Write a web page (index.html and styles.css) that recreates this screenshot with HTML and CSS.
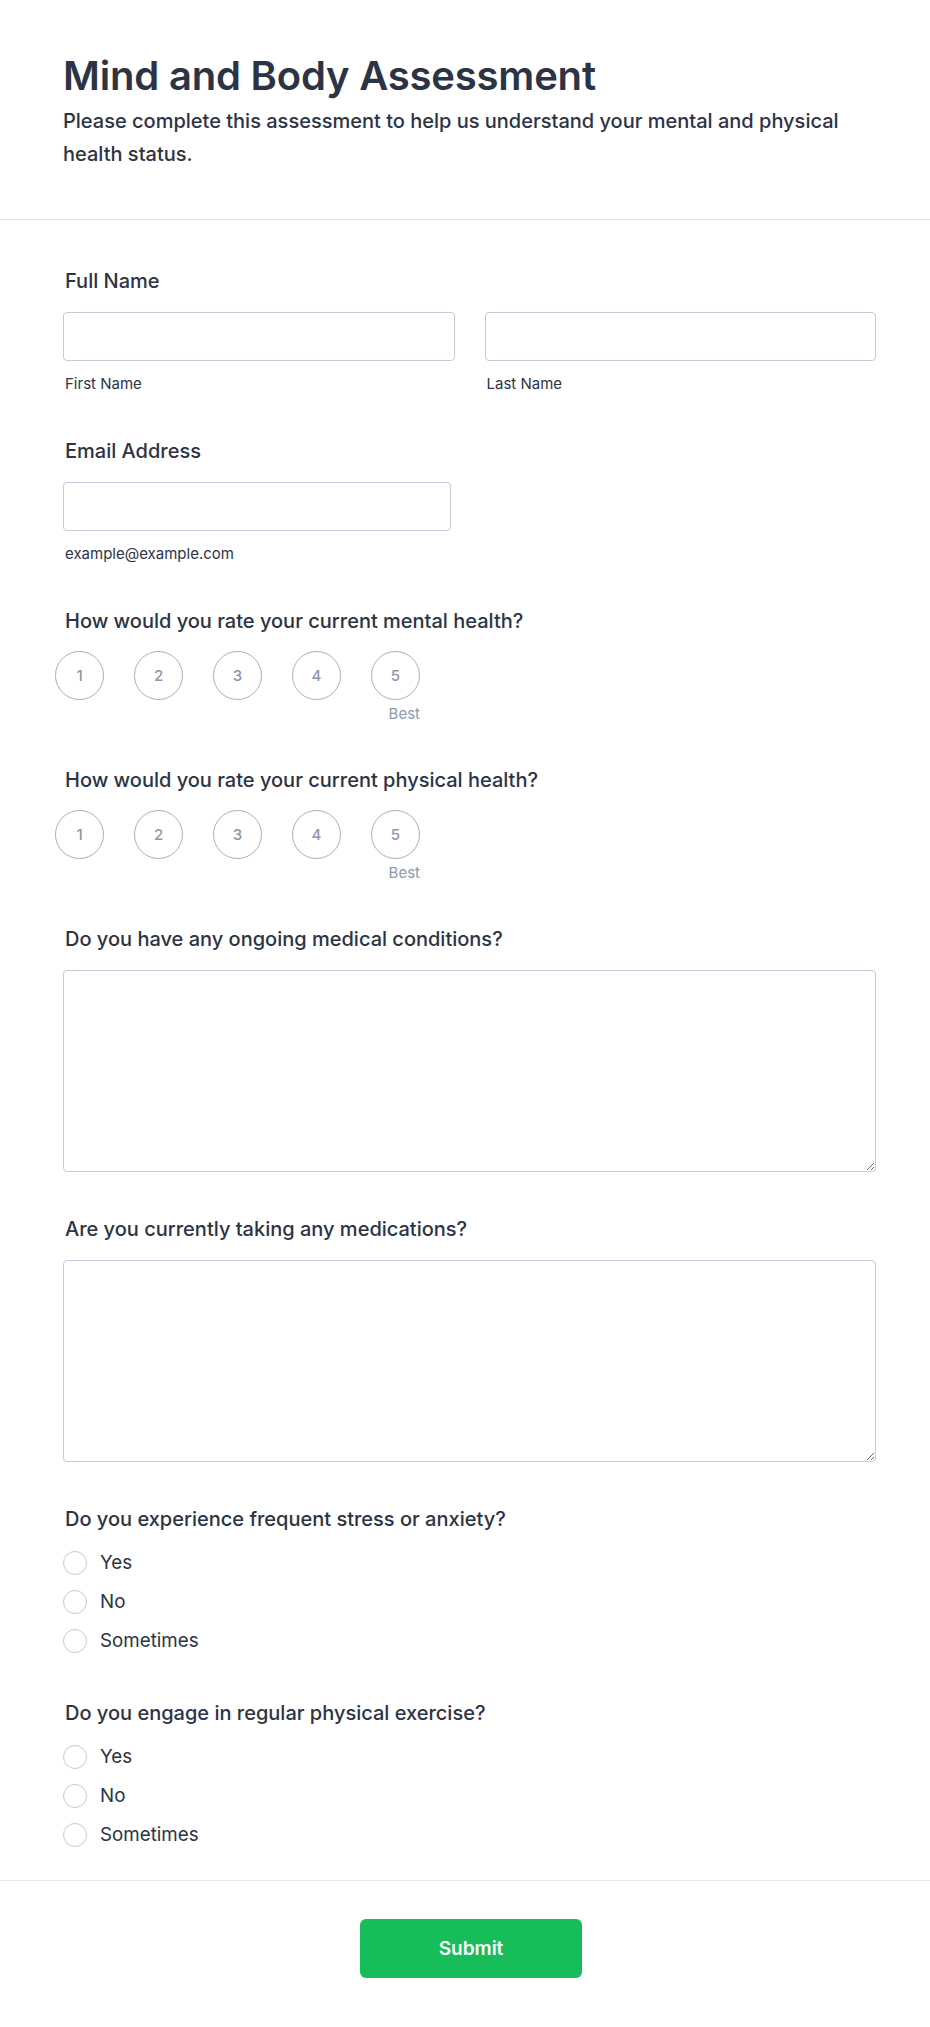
FILE: index.html
```html
<!DOCTYPE html>
<html lang="en">
<head>
  <meta charset="UTF-8" />
  <meta name="viewport" content="width=device-width, initial-scale=1.0" />
  <title>Mind and Body Assessment</title>
  <link rel="stylesheet" href="styles.css">
</head>
<body>
  <form class="form">
    <div class="form-header">
      <h1>Mind and Body Assessment</h1>
      <p class="subtitle">Please complete this assessment to help us understand your mental and physical health status.</p>
    </div>

    <div class="form-body">
      <div class="field">
        <label class="field-label">Full Name</label>
        <div class="name-row">
          <div class="name-col">
            <input type="text" class="input" />
            <span class="sublabel">First Name</span>
          </div>
          <div class="name-col">
            <input type="text" class="input" />
            <span class="sublabel">Last Name</span>
          </div>
        </div>
      </div>

      <div class="field">
        <label class="field-label">Email Address</label>
        <div class="name-col email-col">
          <input type="email" class="input" />
          <span class="sublabel">example@example.com</span>
        </div>
      </div>

      <div class="field">
        <label class="field-label rating-label">How would you rate your current mental health?</label>
        <div class="rating">
          <div class="rating-items">
            <span class="rate">1</span>
            <span class="rate">2</span>
            <span class="rate">3</span>
            <span class="rate">4</span>
            <span class="rate">5</span>
          </div>
          <span class="rating-best">Best</span>
        </div>
      </div>

      <div class="field">
        <label class="field-label rating-label">How would you rate your current physical health?</label>
        <div class="rating">
          <div class="rating-items">
            <span class="rate">1</span>
            <span class="rate">2</span>
            <span class="rate">3</span>
            <span class="rate">4</span>
            <span class="rate">5</span>
          </div>
          <span class="rating-best">Best</span>
        </div>
      </div>

      <div class="field">
        <label class="field-label">Do you have any ongoing medical conditions?</label>
        <textarea class="textarea"></textarea>
      </div>

      <div class="field">
        <label class="field-label">Are you currently taking any medications?</label>
        <textarea class="textarea"></textarea>
      </div>

      <div class="field field-radio">
        <label class="field-label">Do you experience frequent stress or anxiety?</label>
        <div class="radio-list">
          <label class="radio"><span class="radio-circle"></span>Yes</label>
          <label class="radio"><span class="radio-circle"></span>No</label>
          <label class="radio"><span class="radio-circle"></span>Sometimes</label>
        </div>
      </div>

      <div class="field field-last">
        <label class="field-label">Do you engage in regular physical exercise?</label>
        <div class="radio-list">
          <label class="radio"><span class="radio-circle"></span>Yes</label>
          <label class="radio"><span class="radio-circle"></span>No</label>
          <label class="radio"><span class="radio-circle"></span>Sometimes</label>
        </div>
      </div>
    </div>

    <div class="form-footer">
      <button type="button" class="btn-submit">Submit</button>
    </div>
  </form>
</body>
</html>
```

FILE: styles.css
```css
    body {
      font-family: Inter, "Noto Sans", sans-serif;
      background-color: #fff;
      color: #2c3345;
      margin: 0;
    }
    .form {
      width: 100%;
    }
    .form-header {
      padding: 52px 63px 48px 63px;
      border-bottom: 1px solid #e3e5ec;
    }
    h1 {
      font-size: 40px;
      font-weight: 600;
      line-height: 48px;
      margin: 0;
      letter-spacing: -0.2px;
    }
    .subtitle {
      font-size: 20px;
      font-weight: 500;
      line-height: 33px;
      margin: 5px 0 0 0;
      max-width: 800px;
    }
    .form-body {
      padding: 47px 54px 26px 63px;
      border-bottom: 1px solid #e8e9ef;
    }
    .field {
      margin-bottom: 43px;
    }
    .field-radio {
      margin-bottom: 39px;
    }
    .field-last {
      margin-bottom: 0;
    }
    .field-label {
      display: block;
      font-size: 20px;
      font-weight: 500;
      line-height: 28px;
      padding-left: 2px;
      margin-bottom: 17px;
    }
    .rating-label {
      margin-bottom: 16px;
    }
    .name-row {
      display: flex;
      gap: 30px;
    }
    .name-col {
      flex: 1;
      display: flex;
      flex-direction: column;
    }
    .email-col {
      width: 388px;
      flex: none;
    }
    .input {
      height: 49px;
      box-sizing: border-box;
      border: 1px solid #c3cad8;
      border-radius: 4px;
      font-family: inherit;
      font-size: 18px;
      padding: 0 12px;
    }
    .sublabel {
      font-size: 15px;
      line-height: 20px;
      margin-top: 13px;
      padding-left: 2px;
      color: #2c3345;
    }
    .rating {
      display: inline-flex;
      flex-direction: column;
      margin-left: -8px;
    }
    .rating-items {
      display: flex;
      gap: 30px;
    }
    .rate {
      width: 49px;
      height: 49px;
      box-sizing: border-box;
      border: 1px solid #a9afc0;
      border-radius: 50%;
      display: flex;
      align-items: center;
      justify-content: center;
      font-size: 15px;
      font-weight: 500;
      color: #8b97ad;
    }
    .rating-best {
      align-self: flex-end;
      font-size: 15px;
      line-height: 18px;
      margin-top: 5px;
      color: #8d99ae;
    }
    .textarea {
      display: block;
      width: 100%;
      height: 202px;
      box-sizing: border-box;
      border: 1px solid #c3cad8;
      border-radius: 4px;
      font-family: inherit;
      resize: vertical;
    }
    .radio-list {
      display: flex;
      flex-direction: column;
      margin-top: -7px;
    }
    .radio {
      display: flex;
      align-items: center;
      height: 39px;
      font-size: 18.75px;
      gap: 13px;
    }
    .radio-circle {
      width: 24px;
      height: 24px;
      box-sizing: border-box;
      border: 1px solid #c3cad8;
      border-radius: 50%;
    }
    .form-footer {
      display: flex;
      justify-content: center;
      padding: 38px 0 48px 12px;
    }
    .btn-submit {
      width: 222px;
      height: 59px;
      background-color: #18bd5b;
      color: #fff;
      border: none;
      border-radius: 6px;
      font-family: inherit;
      font-size: 19px;
      font-weight: 600;
      cursor: pointer;
    }
    .btn-submit:hover {
      background-color: #16aa52;
    }
```
